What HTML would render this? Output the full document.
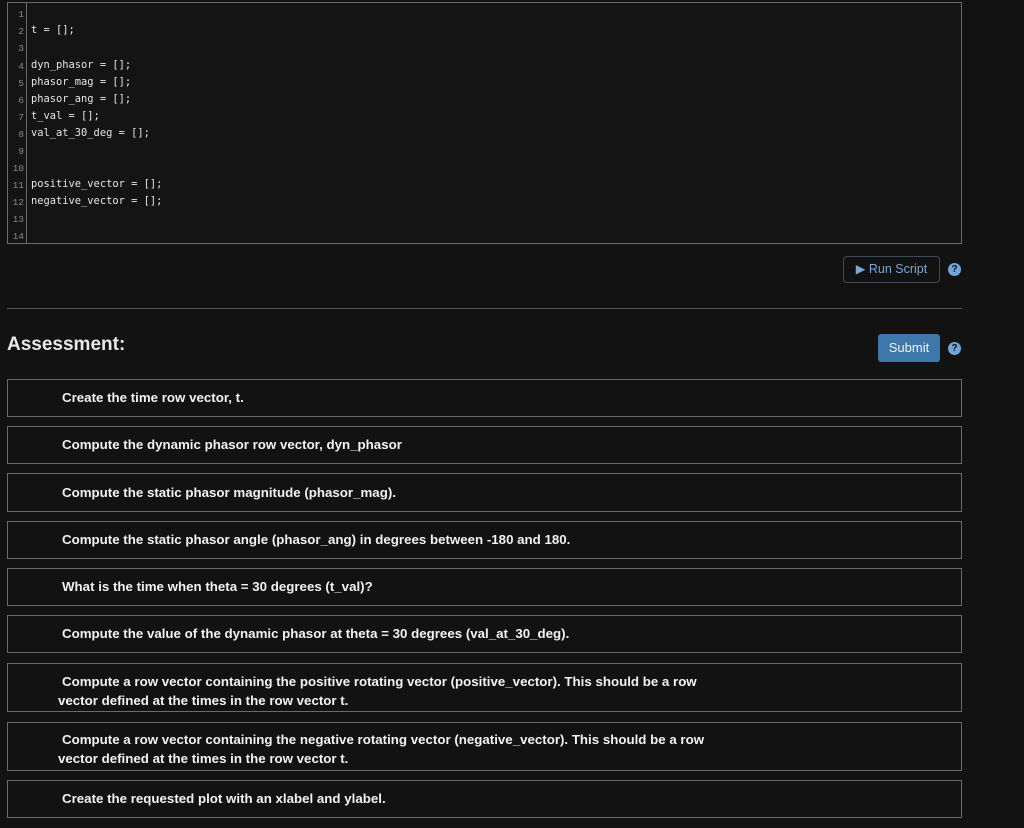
<!DOCTYPE html>
<html><head><style>
body{margin:0;background:#121212;width:1024px;height:828px;overflow:hidden;position:relative;font-family:"Liberation Sans",sans-serif;}
.ed{position:absolute;left:7px;top:2px;width:953px;height:240px;border:1px solid #6a6a6a;background:#141414;}
.gut{position:absolute;left:0;top:0;width:18px;height:240px;border-right:1px solid #6a6a6a;}
.ln{position:absolute;left:0;width:16px;text-align:right;font:9.5px "Liberation Mono",monospace;color:#8a8a8a;}
.cd{position:absolute;left:23px;font:10.4px "DejaVu Sans Mono","Liberation Mono",monospace;color:#e6e6e6;white-space:pre;}
.run{position:absolute;left:843px;top:256px;width:97px;height:27px;border:1px solid #3c4c5c;border-radius:4px;box-sizing:border-box;color:#7aa6d6;font-size:12.5px;line-height:25px;text-align:center;}
.q{position:absolute;width:13px;height:13px;border-radius:50%;background:#6fa5dc;color:#121212;font-size:10px;font-weight:bold;text-align:center;line-height:13px;}
.hr{position:absolute;left:7px;top:308px;width:955px;height:1px;background:#555;}
h2{position:absolute;left:7px;top:334px;margin:0;font-size:19px;font-weight:bold;color:#e8e8e8;}
.sub{position:absolute;left:878px;top:334px;width:62px;height:28px;background:#3e78aa;border-radius:3px;color:#f0f0f0;font-size:13px;line-height:28px;text-align:center;}
.b{position:absolute;left:7px;width:953px;border:1px solid #6a6a6a;box-sizing:content-box;color:#f2f2f2;font-weight:bold;font-size:13.3px;}
.b span{position:absolute;left:54px;white-space:nowrap;}
</style></head><body>
<div class="ed"><div class="gut"></div>
<div class="ln" style="top:6px">1</div><div class="ln" style="top:23px">2</div><div class="ln" style="top:40px">3</div><div class="ln" style="top:58px">4</div><div class="ln" style="top:75px">5</div><div class="ln" style="top:92px">6</div><div class="ln" style="top:109px">7</div><div class="ln" style="top:126px">8</div><div class="ln" style="top:143px">9</div><div class="ln" style="top:160px">10</div><div class="ln" style="top:177px">11</div><div class="ln" style="top:194px">12</div><div class="ln" style="top:211px">13</div><div class="ln" style="top:228px">14</div>
<div class="cd" style="top:21px">t = [];</div>
<div class="cd" style="top:56px">dyn_phasor = [];</div>
<div class="cd" style="top:73px">phasor_mag = [];</div>
<div class="cd" style="top:90px">phasor_ang = [];</div>
<div class="cd" style="top:107px">t_val = [];</div>
<div class="cd" style="top:124px">val_at_30_deg = [];</div>
<div class="cd" style="top:175px">positive_vector = [];</div>
<div class="cd" style="top:192px">negative_vector = [];</div>
</div>
<div class="run">▶ Run Script</div>
<div class="q" style="left:948px;top:263px">?</div>
<div class="hr"></div>
<h2>Assessment:</h2>
<div class="sub">Submit</div>
<div class="q" style="left:948px;top:342px">?</div>
<div class="b" style="top:379px;height:36px"><span style="top:10px">Create the time row vector, t.</span></div>
<div class="b" style="top:426px;height:36px"><span style="top:10px">Compute the dynamic phasor row vector, dyn_phasor</span></div>
<div class="b" style="top:473px;height:37px"><span style="top:11px">Compute the static phasor magnitude (phasor_mag).</span></div>
<div class="b" style="top:521px;height:36px"><span style="top:10px">Compute the static phasor angle (phasor_ang) in degrees between -180 and 180.</span></div>
<div class="b" style="top:568px;height:36px"><span style="top:10px">What is the time when theta = 30 degrees (t_val)?</span></div>
<div class="b" style="top:615px;height:36px"><span style="top:10px">Compute the value of the dynamic phasor at theta = 30 degrees (val_at_30_deg).</span></div>
<div class="b" style="top:663px;height:47px"><span style="top:8px;left:50px;line-height:19px;text-indent:4px;width:700px">Compute a row vector containing the positive rotating vector (positive_vector). This should be a row<br>vector defined at the times in the row vector t.</span></div>
<div class="b" style="top:722px;height:47px"><span style="top:7px;left:50px;line-height:19px;text-indent:4px;width:700px">Compute a row vector containing the negative rotating vector (negative_vector). This should be a row<br>vector defined at the times in the row vector t.</span></div>
<div class="b" style="top:780px;height:36px"><span style="top:10px">Create the requested plot with an xlabel and ylabel.</span></div>
</body></html>
